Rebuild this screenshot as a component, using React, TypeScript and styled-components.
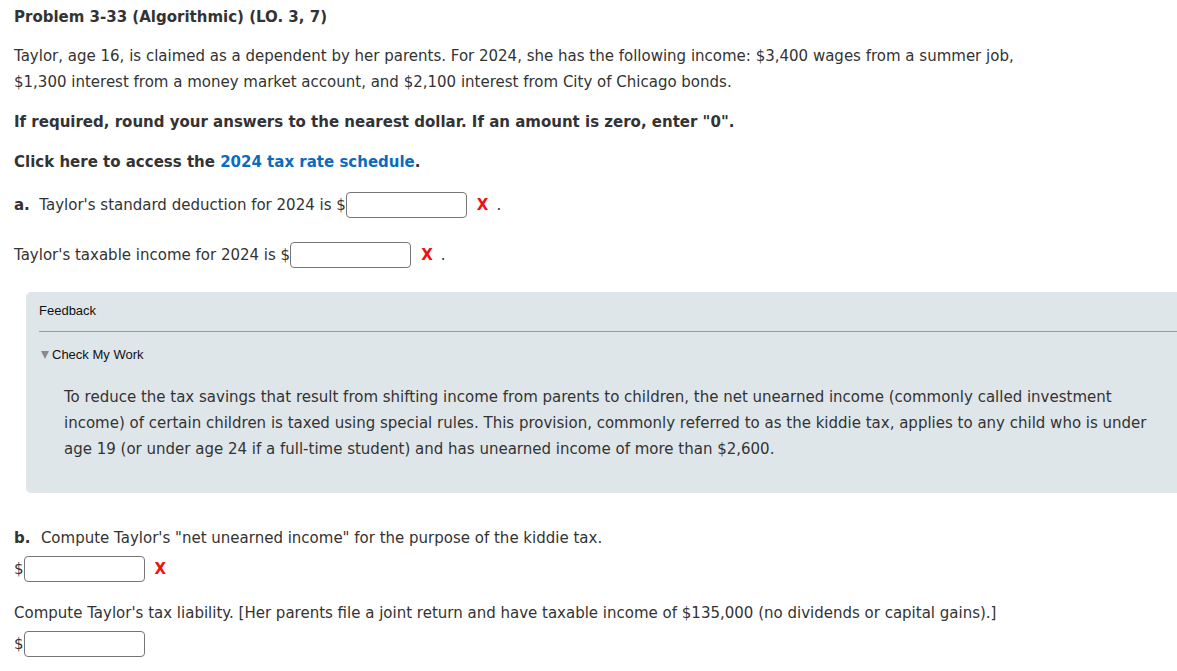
import styled, { createGlobalStyle } from 'styled-components';

const GlobalStyle = createGlobalStyle`
  html, body {
    margin: 0;
    padding: 0;
    overflow: hidden;
    background: #ffffff;
  }

  body {
    font-family: "DejaVu Sans", Verdana, sans-serif;
    font-size: 15px;
    color: #333333;
  }
`;

const Page = styled.div`
  padding: 4px 0 0 14px;
`;

const Title = styled.h1`
  margin: 0;

  font-size: 15px;
  font-weight: 700;
  line-height: 26px;
`;

const Text = styled.p<{ $gap: number; $bold?: boolean }>`
  margin: ${(p) => p.$gap}px 0 0;

  font-weight: ${(p) => (p.$bold ? 700 : 400)};
  line-height: 26px;
`;

const Marker = styled.b`
  white-space: pre;
`;

const Link = styled.a`
  color: #0b6bbf;
  text-decoration: none;
`;

const Row = styled.div<{ $gap: number }>`
  display: flex;
  align-items: center;

  height: 26px;
  margin-top: ${(p) => p.$gap}px;
`;

const Label = styled.span`
  white-space: pre;
`;

const AnswerBox = styled.input`
  width: 121px;
  height: 26px;

  box-sizing: border-box;
  margin: 0;
  padding: 0 4px;

  border: 1px solid #767676;
  border-radius: 4px;
  background: #ffffff;
`;

const Wrong = styled.span`
  margin-left: 10px;

  color: #f01010;
  font-size: 15px;
  font-weight: 700;
`;

const Dot = styled.span`
  margin-left: 8px;
`;

const FeedbackPanel = styled.section`
  margin: 24px -40px 0 12px;
  padding: 10px 0 31px 13px;

  background: #dfe6e9;
  border-radius: 5px 0 0 5px;

  font-family: "Liberation Sans", Arial, sans-serif;
  font-size: 13px;
  color: #111111;
`;

const PanelHeading = styled.div`
  line-height: 18px;
  padding-bottom: 11px;

  border-bottom: 1px solid #999999;
`;

const Toggle = styled.div`
  display: flex;
  align-items: center;

  margin-top: 14px;
  line-height: 18px;

  &::before {
    content: '';
    width: 0;
    height: 0;
    margin: 0 3px 0 2px;

    border-left: 4px solid transparent;
    border-right: 4px solid transparent;
    border-top: 8px solid #8a8a8a;
  }
`;

const Explanation = styled.p`
  margin: 20px 0 0 25px;
  padding-right: 50px;

  font-family: "DejaVu Sans", Verdana, sans-serif;
  font-size: 15px;
  line-height: 26px;
  color: #333333;
`;

const AnswerRow = ({ label, gap, wrong = true, dot = false, prefix }: { label: string; gap: number; wrong?: boolean; dot?: boolean; prefix?: string }) => (
  <Row $gap={gap}>
    {prefix && <Marker>{prefix}</Marker>}
    <Label>{label}</Label>
    <AnswerBox type="text" />
    {wrong && <Wrong>X</Wrong>}
    {dot && <Dot>.</Dot>}
  </Row>
);

export default function App() {
  return (
    <Page>
      <GlobalStyle />
      <Title>Problem 3-33 (Algorithmic) (LO. 3, 7)</Title>
      <Text $gap={13}>
        Taylor, age 16, is claimed as a dependent by her parents. For 2024, she has the following income: $3,400 wages from a summer job,
        <br />
        $1,300 interest from a money market account, and $2,100 interest from City of Chicago bonds.
      </Text>
      <Text $gap={14} $bold>
        If required, round your answers to the nearest dollar. If an amount is zero, enter "0".
      </Text>
      <Text $gap={14} $bold>
        Click here to access the <Link href="#">2024 tax rate schedule</Link>.
      </Text>

      <AnswerRow prefix="a." label="  Taylor's standard deduction for 2024 is $" gap={17} dot />
      <AnswerRow label="Taylor's taxable income for 2024 is $" gap={24} dot />

      <FeedbackPanel>
        <PanelHeading>Feedback</PanelHeading>
        <Toggle>Check My Work</Toggle>
        <Explanation>
          To reduce the tax savings that result from shifting income from parents to children, the net unearned income (commonly called investment income) of certain children is taxed using special rules. This provision, commonly referred to as the kiddie tax, applies to any child who is under age 19 (or under age 24 if a full-time student) and has unearned income of more than $2,600.
        </Explanation>
      </FeedbackPanel>

      <Text $gap={32}>
        <Marker>{'b.  '}</Marker>Compute Taylor's "net unearned income" for the purpose of the kiddie tax.
      </Text>
      <AnswerRow label="$" gap={5} />

      <Text $gap={18}>
        Compute Taylor's tax liability. [Her parents file a joint return and have taxable income of $135,000 (no dividends or capital gains).]
      </Text>
      <AnswerRow label="$" gap={5} wrong={false} />
    </Page>
  );
}
